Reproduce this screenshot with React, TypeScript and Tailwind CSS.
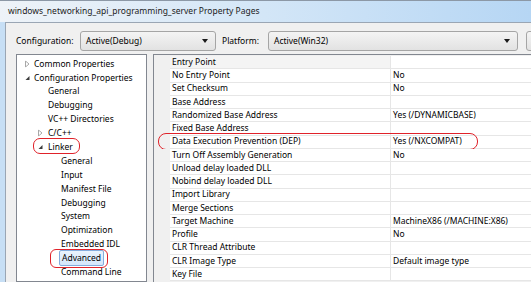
import React from 'react';

const font = { fontFamily: '"Noto Sans", "Open Sans", sans-serif' };

const treeItems: { label: string; level: number; arrow?: 'open' | 'closed'; mark?: 'linker' | 'advanced' }[] = [
    { label: 'Common Properties', level: 0, arrow: 'closed' },
    { label: 'Configuration Properties', level: 0, arrow: 'open' },
    { label: 'General', level: 1 },
    { label: 'Debugging', level: 1 },
    { label: 'VC++ Directories', level: 1 },
    { label: 'C/C++', level: 1, arrow: 'closed' },
    { label: 'Linker', level: 1, arrow: 'open', mark: 'linker' },
    { label: 'General', level: 2 },
    { label: 'Input', level: 2 },
    { label: 'Manifest File', level: 2 },
    { label: 'Debugging', level: 2 },
    { label: 'System', level: 2 },
    { label: 'Optimization', level: 2 },
    { label: 'Embedded IDL', level: 2 },
    { label: 'Advanced', level: 2, mark: 'advanced' },
    { label: 'Command Line', level: 2 },
];

const gridRows: [string, string][] = [
    ['Entry Point', ''],
    ['No Entry Point', 'No'],
    ['Set Checksum', 'No'],
    ['Base Address', ''],
    ['Randomized Base Address', 'Yes (/DYNAMICBASE)'],
    ['Fixed Base Address', ''],
    ['Data Execution Prevention (DEP)', 'Yes (/NXCOMPAT)'],
    ['Turn Off Assembly Generation', 'No'],
    ['Unload delay loaded DLL', ''],
    ['Nobind delay loaded DLL', ''],
    ['Import Library', ''],
    ['Merge Sections', ''],
    ['Target Machine', 'MachineX86 (/MACHINE:X86)'],
    ['Profile', 'No'],
    ['CLR Thread Attribute', ''],
    ['CLR Image Type', 'Default image type'],
    ['Key File', ''],
];

function Arrow({ open }: { open: boolean }) {
    if (open) {
        return (
            <svg width="5" height="5" viewBox="0 0 5 5">
                <path d="M4.5 0.5 L4.5 4.5 L0.5 4.5 Z" fill="#3c3c3c" />
            </svg>
        );
    }
    return (
        <svg width="5" height="7" viewBox="0 0 5 7">
            <path d="M0.5 0.5 L4 3.5 L0.5 6.5 Z" fill="none" stroke="#a8a8a8" />
        </svg>
    );
}

function Combo({ value, className }: { value: string; className: string }) {
    return (
        <div className={`shrink-0 h-[20px] rounded-[3px] border border-[#a5a5a5] bg-gradient-to-b from-[#f4f4f4] to-[#e2e2e2] flex items-center pl-[5px] pr-[7px] ${className}`}>
            <span className="flex-1 text-[8.5px] text-black leading-none">{value}</span>
            <svg width="6" height="4" viewBox="0 0 6 4">
                <path d="M0 0 L6 0 L3 4 Z" fill="#1a1a1a" />
            </svg>
        </div>
    );
}

export default function App() {
    return (
        <div className="w-[531px] h-[282px] overflow-hidden bg-[#c7dff5] flex flex-col" style={font}>
            {/* Title bar */}
            <div className="h-[22px] shrink-0 border-t border-[#8c98a6] bg-gradient-to-r from-[#eef3f8] via-[#d3e6f7] to-[#b6d6f4] flex items-center pl-[8px]">
                <span className="text-[8.5px] text-[#1b1b1b] leading-none">windows_networking_api_programming_server Property Pages</span>
            </div>

            <div className="flex flex-1 min-h-0 pl-[5px]">
                <div className="flex-1 min-w-0 bg-[#f0f0f0] border-l border-t border-[#9aa6b4] flex flex-col pl-[10px] overflow-hidden">
                    {/* Configuration row */}
                    <div className="flex items-center h-[20px] mt-[8px] shrink-0">
                        <span className="shrink-0 text-[8.5px] text-black w-[64px]">Configuration:</span>
                        <Combo value="Active(Debug)" className="w-[136px]" />
                        <span className="shrink-0 text-[8.5px] text-black ml-[6px] w-[46px]">Platform:</span>
                        <Combo value="Active(Win32)" className="w-[250px]" />
                        <div className="ml-[8px] w-[20px] h-[20px] rounded-[3px] border border-[#a5a5a5] bg-gradient-to-b from-[#f4f4f4] to-[#e2e2e2] shrink-0" />
                    </div>

                    <div className="flex flex-1 min-h-0 mt-[3px] gap-[6px]">
                        {/* Tree */}
                        <div className="w-[131px] shrink-0 bg-white border border-[#828790] pt-[2px]">
                            {treeItems.map((item, i) => {
                                const textLeft = item.level === 0 ? 'pl-[17px]' : item.level === 1 ? 'pl-[31px]' : 'pl-[44px]';
                                return (
                                    <div key={i} className={`relative h-[13.9px] flex items-center ${textLeft}`}>
                                        {item.arrow && (
                                            <span className={`absolute top-1/2 -translate-y-1/2 flex ${item.level === 0 ? 'left-[8px]' : 'left-[21px]'}`}>
                                                <Arrow open={item.arrow === 'open'} />
                                            </span>
                                        )}
                                        {item.mark === 'advanced' ? (
                                            <span className="relative -ml-[2px] px-[2px] h-[16px] flex items-center border border-[#84acdd] rounded-[2px] bg-gradient-to-b from-[#eaf3fd] to-[#d4e6fb] text-[8.5px] text-black leading-none whitespace-nowrap">
                                                {item.label}
                                            </span>
                                        ) : (
                                            <span className="text-[8.5px] text-black leading-none whitespace-nowrap">{item.label}</span>
                                        )}
                                        {item.mark === 'linker' && (
                                            <span className="absolute left-[16px] top-[-2px] w-[47px] h-[16px] border-[1.5px] border-[#e0222a] rounded-[7px]" />
                                        )}
                                        {item.mark === 'advanced' && (
                                            <span className="absolute left-[33px] top-[-2px] w-[58px] h-[19px] border-[1.5px] border-[#e0222a] rounded-[6px]" />
                                        )}
                                    </div>
                                );
                            })}
                        </div>

                        {/* Property grid */}
                        <div className="flex-1 min-w-0 bg-[#f0f0f0] border-l border-t border-[#828790] pt-[1px]">
                            {gridRows.map(([name, value], i) => (
                                <div key={i} className="relative flex h-[13.25px]">
                                    <div className="w-[16px] shrink-0 bg-[#f0f0f0]" />
                                    <div className={`w-[221px] shrink-0 border-b border-r border-[#e6e6e6] flex items-center pl-[2px] ${i === 0 ? 'bg-[#f4f4f4]' : 'bg-white'}`}>
                                        <span className="text-[8.5px] text-black leading-none whitespace-nowrap">{name}</span>
                                    </div>
                                    <div className="flex-1 bg-white border-b border-[#e6e6e6] flex items-center pl-[2px]">
                                        <span className="text-[8.5px] text-black leading-none whitespace-nowrap">{value}</span>
                                    </div>
                                    {i === 6 && (
                                        <span className="absolute left-[4px] top-[-3px] w-[320px] h-[17px] border-[1.5px] border-[#e0222a] rounded-[8px]" />
                                    )}
                                </div>
                            ))}
                        </div>
                    </div>
                </div>
            </div>
        </div>
    );
}
